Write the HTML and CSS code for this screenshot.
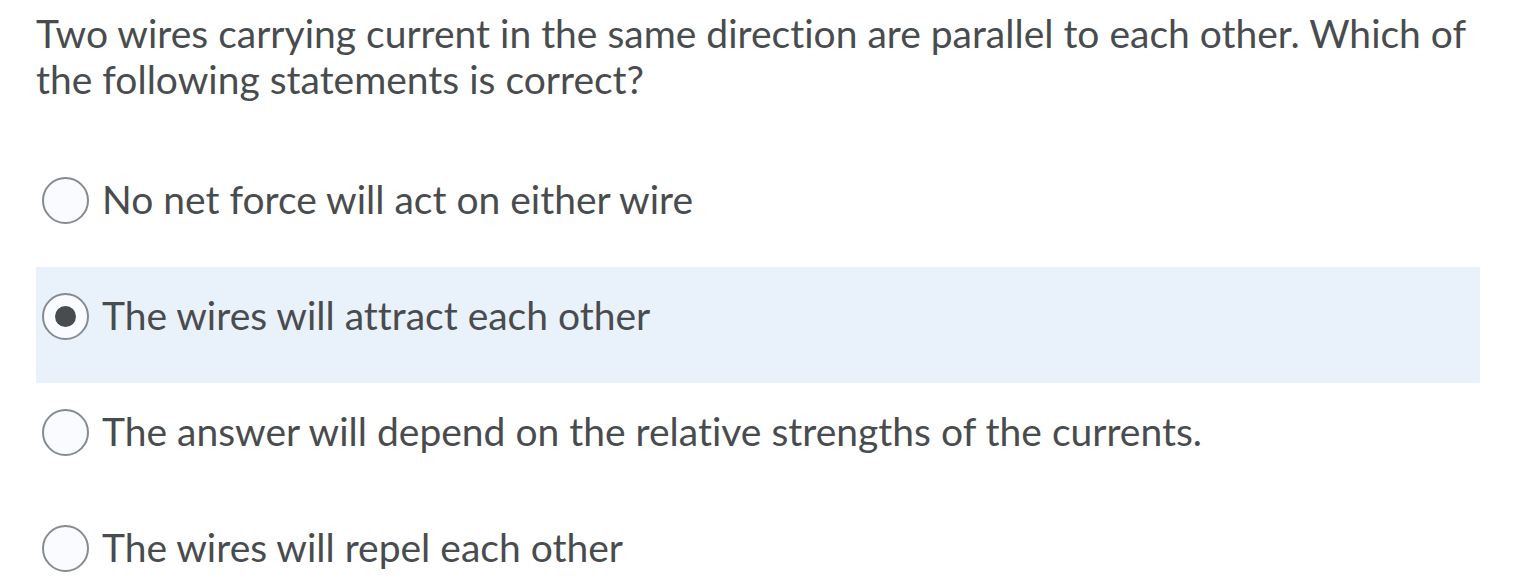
FILE: index.html
```html
<!DOCTYPE html>
<html>
<head>
<meta charset="utf-8">
<link rel="stylesheet" href="styles.css">
</head>
<body>
<div class="question">
  <p class="prompt">Two wires carrying current in the same direction are parallel to each other. Which of the following statements is correct?</p>
  <div class="options">
    <label class="option">
      <span class="radio"></span>
      <span class="label-text">No net force will act on either wire</span>
    </label>
    <label class="option selected">
      <span class="radio checked"></span>
      <span class="label-text">The wires will attract each other</span>
    </label>
    <label class="option">
      <span class="radio"></span>
      <span class="label-text">The answer will depend on the relative strengths of the currents.</span>
    </label>
    <label class="option">
      <span class="radio"></span>
      <span class="label-text">The wires will repel each other</span>
    </label>
  </div>
</div>
</body>
</html>
```
FILE: styles.css
```css
html, body {
  margin: 0;
  padding: 0;
  background: #ffffff;
}
body {
  font-family: Lato, "Open Sans", sans-serif;
  color: #494c4e;
  width: 1536px;
  height: 588px;
  overflow: hidden;
  font-variant-ligatures: none;
}
.question {
  padding: 10px 56px 0 36px;
}
.prompt {
  margin: 0;
  font-size: 39px;
  line-height: 46px;
}
.options {
  margin-top: 49px;
  display: flex;
  flex-direction: column;
}
.option {
  display: flex;
  align-items: flex-start;
  height: 116px;
  box-sizing: border-box;
  padding: 26px 0 0 6px;
  gap: 13px;
}
.option.selected {
  background: #e9f1fb;
}
.radio {
  flex: none;
  width: 47px;
  height: 47px;
  box-sizing: border-box;
  border: 2px solid #868b8f;
  border-radius: 50%;
  background: #f9fbff;
  display: flex;
  align-items: center;
  justify-content: center;
}
.radio.checked::after {
  content: "";
  width: 21px;
  height: 21px;
  border-radius: 50%;
  background: #494c4e;
}
.label-text {
  font-size: 39px;
  line-height: 45px;
}
```
